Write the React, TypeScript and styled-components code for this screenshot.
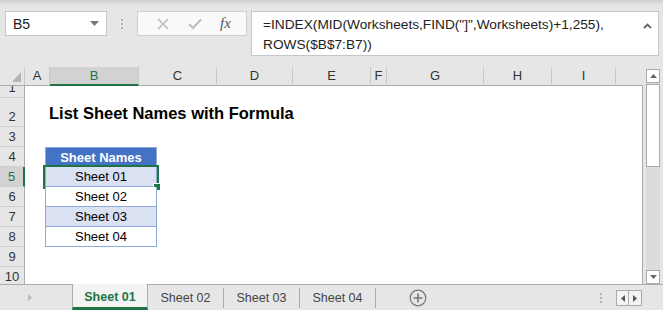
import React from 'react';
import styled, { createGlobalStyle } from 'styled-components';

const GlobalStyle = createGlobalStyle`
  html, body {
    margin: 0;
    padding: 0;
  }
  body {
    background: #e6e6e6;
    font-family: 'Liberation Sans', Arial, sans-serif;
  }
  * {
    box-sizing: border-box;
  }
`;

const GREEN = '#217346';

const columns = [
  { label: 'A', width: 25 },
  { label: 'B', width: 89, active: true },
  { label: 'C', width: 78 },
  { label: 'D', width: 76 },
  { label: 'E', width: 78 },
  { label: 'F', width: 16 },
  { label: 'G', width: 97 },
  { label: 'H', width: 68 },
  { label: 'I', width: 64 },
];

const rows = [
  { n: 1, h: 12 },
  { n: 2, h: 29 },
  { n: 3, h: 20 },
  { n: 4, h: 20 },
  { n: 5, h: 20 },
  { n: 6, h: 20 },
  { n: 7, h: 20 },
  { n: 8, h: 20 },
  { n: 9, h: 20 },
  { n: 10, h: 20 },
];

const sheetNames = ['Sheet 01', 'Sheet 02', 'Sheet 03', 'Sheet 04'];

const App = () => {
  const renderCell = (n: number) => {
    if (n === 2) return <Title>List Sheet Names with Formula</Title>;
    if (n === 4) return <TableHead>Sheet Names</TableHead>;
    if (n >= 5 && n <= 8) {
      const i = n - 5;
      return (
        <TableCell $shaded={i % 2 === 0} $selected={i === 0}>
          {sheetNames[i]}
        </TableCell>
      );
    }
    return null;
  };

  return (
    <Window>
      <GlobalStyle />
      <FormulaRow>
        <NameBox>
          <span>B5</span>
          <svg width="9" height="5" viewBox="0 0 9 5">
            <polygon points="0,0 9,0 4.5,5" fill="#777" />
          </svg>
        </NameBox>
        <Grip>
          <i />
          <i />
          <i />
        </Grip>
        <FxButtons>
          <svg width="12" height="12" viewBox="0 0 12 12">
            <path d="M1 1 L11 11 M11 1 L1 11" stroke="#bdbdbd" strokeWidth="1.6" />
          </svg>
          <svg width="14" height="12" viewBox="0 0 14 12">
            <path d="M1 6 L5 10 L13 1.5" stroke="#bdbdbd" strokeWidth="2" fill="none" />
          </svg>
          <FxLabel>fx</FxLabel>
        </FxButtons>
        <FormulaBox>
          <FormulaText>
            =INDEX(MID(Worksheets,FIND("]",Worksheets)+1,255),
            <br />
            ROWS($B$7:B7))
          </FormulaText>
          <svg width="9" height="6" viewBox="0 0 9 6">
            <path d="M1 5 L4.5 1.5 L8 5" stroke="#666" strokeWidth="1.8" fill="none" />
          </svg>
        </FormulaBox>
      </FormulaRow>

      <GridArea>
        <Sheet>
          <ColumnHeaderRow>
            <Corner>
              <svg width="9" height="10" viewBox="0 0 9 10">
                <polygon points="9,0 9,10 0,10" fill="#b4b4b4" />
              </svg>
            </Corner>
            {columns.map((c) => (
              <ColumnHeader key={c.label} $width={c.width} $active={c.active}>
                {c.label}
              </ColumnHeader>
            ))}
          </ColumnHeaderRow>
          <SheetBody>
            {rows.map((r) => (
              <Row key={r.n} $height={r.h}>
                <RowHeader $active={r.n === 5}>
                  <span>{r.n}</span>
                </RowHeader>
                <RowCells>{renderCell(r.n)}</RowCells>
              </Row>
            ))}
          </SheetBody>
        </Sheet>
        <Scrollbar>
          <ScrollButton>
            <svg width="7" height="4" viewBox="0 0 7 4">
              <polygon points="0,4 7,4 3.5,0" fill="#666" />
            </svg>
          </ScrollButton>
          <ScrollThumb />
          <ScrollTrack />
          <ScrollButton>
            <svg width="7" height="4" viewBox="0 0 7 4">
              <polygon points="0,0 7,0 3.5,4" fill="#666" />
            </svg>
          </ScrollButton>
        </Scrollbar>
      </GridArea>

      <TabBar>
        <TabNav>
          <svg width="4" height="7" viewBox="0 0 4 7">
            <polygon points="0,0 4,3.5 0,7" fill="#bcbcbc" />
          </svg>
        </TabNav>
        {sheetNames.map((name, i) => (
          <Tab key={name} $active={i === 0}>
            {name}
          </Tab>
        ))}
        <AddSheet>
          <svg width="18" height="18" viewBox="0 0 18 18">
            <circle cx="9" cy="9" r="7.8" stroke="#777" strokeWidth="1.2" fill="none" />
            <path d="M9 4.5 V13.5 M4.5 9 H13.5" stroke="#777" strokeWidth="1.6" />
          </svg>
        </AddSheet>
        <TabSpacer />
        <Grip>
          <i />
          <i />
          <i />
        </Grip>
        <HScrollNav>
          <NavHalf>
            <svg width="4" height="7" viewBox="0 0 4 7">
              <polygon points="4,0 0,3.5 4,7" fill="#555" />
            </svg>
          </NavHalf>
          <NavHalf>
            <svg width="4" height="7" viewBox="0 0 4 7">
              <polygon points="0,0 4,3.5 0,7" fill="#555" />
            </svg>
          </NavHalf>
        </HScrollNav>
      </TabBar>
    </Window>
  );
};

export default App;

const Window = styled.div`
  width: 663px;
  height: 310px;
  display: flex;
  flex-direction: column;
  background: #e6e6e6;
  overflow: hidden;
`;

const FormulaRow = styled.div`
  height: 67px;
  display: flex;
  align-items: flex-start;
  padding: 11px 4px 0 5px;
  background: linear-gradient(to bottom, #cfcfcf 0px, #e6e6e6 6px, #e6e6e6 100%);
`;

const NameBox = styled.div`
  width: 102px;
  height: 25px;
  display: flex;
  align-items: center;
  justify-content: space-between;
  padding: 0 7px 0 7px;
  background: #fff;
  border: 1px solid #c6c6c6;
  font-size: 14px;
  color: #222;
`;

const Grip = styled.div`
  width: 30px;
  height: 25px;
  display: flex;
  flex-direction: column;
  align-items: center;
  justify-content: center;
  gap: 2px;

  i {
    display: block;
    width: 2px;
    height: 2px;
    background: #b4b4b4;
  }
`;

const FxButtons = styled.div`
  width: 110px;
  height: 25px;
  display: flex;
  align-items: center;
  justify-content: space-around;
  padding: 0 6px 0 10px;
  background: #f9f9f9;
  border: 1px solid #d0d0d0;
`;

const FxLabel = styled.span`
  font-family: 'Liberation Serif', 'Times New Roman', serif;
  font-style: italic;
  font-size: 15px;
  color: #555;
`;

const FormulaBox = styled.div`
  flex: 1;
  height: 45px;
  margin-left: 4px;
  display: flex;
  align-items: flex-start;
  justify-content: space-between;
  padding: 3px 6px 0 11px;
  background: #fff;
  border: 1px solid #c6c6c6;

  svg {
    margin-top: 8px;
  }
`;

const FormulaText = styled.div`
  font-size: 13.7px;
  line-height: 20px;
  color: #222;
`;

const GridArea = styled.div`
  height: 217px;
  display: flex;
  align-items: flex-start;
`;

const Sheet = styled.div`
  width: 643px;
  height: 217px;
  display: flex;
  flex-direction: column;
`;

const ColumnHeaderRow = styled.div`
  height: 19px;
  display: flex;
  border-bottom: 1px solid #ababab;
  background: #e6e6e6;
`;

const Corner = styled.div`
  width: 25px;
  display: flex;
  align-items: flex-end;
  justify-content: flex-end;
  padding: 0 3px 3px 0;
  border-right: 1px solid #c8c8c8;
`;

const ColumnHeader = styled.div<{ $width: number; $active?: boolean }>`
  width: ${(p) => p.$width}px;
  display: flex;
  align-items: center;
  justify-content: center;
  font-size: 13px;
  color: ${(p) => (p.$active ? GREEN : '#333')};
  background: ${(p) => (p.$active ? '#d2d2d2' : 'transparent')};
  border-right: 1px solid #c8c8c8;
  border-bottom: 2px solid ${(p) => (p.$active ? GREEN : 'transparent')};
  margin-bottom: -1px;
`;

const SheetBody = styled.div`
  flex: 1;
  overflow: hidden;
  background: #fff;
  border-right: 1px solid #ababab;
`;

const Row = styled.div<{ $height: number }>`
  height: ${(p) => p.$height}px;
  display: flex;
`;

const RowHeader = styled.div<{ $active?: boolean }>`
  width: 25px;
  flex-shrink: 0;
  display: flex;
  align-items: flex-end;
  justify-content: center;
  overflow: hidden;
  font-size: 13px;
  color: ${(p) => (p.$active ? GREEN : '#333')};
  background: ${(p) => (p.$active ? '#d2d2d2' : '#e6e6e6')};
  border-bottom: 1px solid #cfcfcf;
  border-right: ${(p) => (p.$active ? `2px solid ${GREEN}` : '1px solid #ababab')};

  span {
    line-height: 19px;
    flex-shrink: 0;
  }
`;

const RowCells = styled.div`
  flex: 1;
  display: flex;
  align-items: stretch;
  padding-left: 20px;
`;

const Title = styled.div`
  align-self: center;
  margin: 2px 0 0 4px;
  font-size: 16.5px;
  font-weight: bold;
  color: #000;
`;

const TableHead = styled.div`
  width: 112px;
  display: flex;
  align-items: center;
  justify-content: center;
  background: #4472c4;
  color: #fff;
  font-size: 13px;
  font-weight: bold;
  border: 1px solid #8ea9db;
  border-bottom: none;
`;

const TableCell = styled.div<{ $shaded: boolean; $selected: boolean }>`
  position: relative;
  width: 112px;
  display: flex;
  align-items: center;
  justify-content: center;
  font-size: 13px;
  color: #000;
  background: ${(p) => (p.$shaded ? '#d9e1f2' : '#fff')};
  border: 1px solid #8ea9db;
  border-top: none;
  outline: ${(p) => (p.$selected ? `2px solid ${GREEN}` : 'none')};
  outline-offset: 0px;

  &::after {
    content: '';
    display: ${(p) => (p.$selected ? 'block' : 'none')};
    position: absolute;
    right: -5px;
    bottom: -5px;
    width: 6px;
    height: 6px;
    background: ${GREEN};
    border: 1px solid #fff;
  }
`;

const Scrollbar = styled.div`
  width: 14px;
  height: 215px;
  margin: 2px 0 0 3px;
  display: flex;
  flex-direction: column;
  background: #dcdcdc;
`;

const ScrollButton = styled.div`
  height: 14px;
  display: flex;
  align-items: center;
  justify-content: center;
  background: #fff;
  border: 1px solid #ababab;
`;

const ScrollThumb = styled.div`
  height: 83px;
  margin-top: 1px;
  background: #fff;
  border: 1px solid #ababab;
`;

const ScrollTrack = styled.div`
  flex: 1;
`;

const TabBar = styled.div`
  height: 26px;
  display: flex;
  align-items: stretch;
  border-top: 1px solid #ababab;
  padding-right: 21px;
`;

const TabNav = styled.div`
  width: 72px;
  display: flex;
  align-items: center;
  padding-left: 28px;
`;

const Tab = styled.div<{ $active?: boolean }>`
  width: 76px;
  display: flex;
  align-items: center;
  justify-content: center;
  font-size: 12.5px;
  font-weight: ${(p) => (p.$active ? 'bold' : 'normal')};
  color: ${(p) => (p.$active ? GREEN : '#444')};
  background: ${(p) => (p.$active ? '#f3f3f3' : 'transparent')};
  border-left: ${(p) => (p.$active ? '1px solid #ababab' : 'none')};
  border-right: 1px solid ${(p) => (p.$active ? '#ababab' : '#ababab')};
  border-bottom: 3px solid ${(p) => (p.$active ? GREEN : 'transparent')};
  margin-top: ${(p) => (p.$active ? '-1px' : '3px')};
  margin-bottom: ${(p) => (p.$active ? '0' : '2px')};
  padding-top: ${(p) => (p.$active ? '2px' : '0')};
  border-bottom-width: ${(p) => (p.$active ? '3px' : '0')};
`;

const AddSheet = styled.div`
  width: 84px;
  display: flex;
  align-items: center;
  justify-content: center;
`;

const TabSpacer = styled.div`
  flex: 1;
`;

const HScrollNav = styled.div`
  display: flex;
  align-self: center;
  margin-top: 1px;
`;

const NavHalf = styled.div`
  width: 13px;
  height: 16px;
  display: flex;
  align-items: center;
  justify-content: center;
  background: #f4f4f4;
  border: 1px solid #ababab;

  & + & {
    border-left: none;
  }
`;
